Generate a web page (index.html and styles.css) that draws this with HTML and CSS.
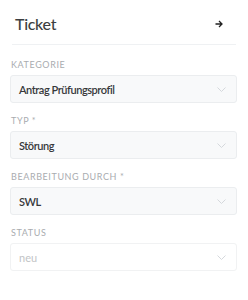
FILE: index.html
```html
<!DOCTYPE html>
<html lang="de">
<head>
<meta charset="utf-8">
<link rel="stylesheet" href="styles.css">
</head>
<body>
<div class="sidebar">
  <div class="header">
    <h2 class="title">Ticket</h2>
    <svg class="arrow" width="8" height="8" viewBox="0 0 8 8"><path d="M0.5 4H7M4 1l3 3-3 3" fill="none" stroke="#222" stroke-width="1.3"/></svg>
  </div>
  <div class="form">
    <div class="field">
      <div class="label">Kategorie</div>
      <div class="select"><span class="value">Antrag Prüfungsprofil</span><svg class="chev" width="9" height="5" viewBox="0 0 9 5"><path d="M0.5 0.5l4 4 4-4" fill="none" stroke="#d5d8dc" stroke-width="1"/></svg></div>
    </div>
    <div class="field">
      <div class="label">Typ *</div>
      <div class="select"><span class="value">Störung</span><svg class="chev" width="9" height="5" viewBox="0 0 9 5"><path d="M0.5 0.5l4 4 4-4" fill="none" stroke="#d5d8dc" stroke-width="1"/></svg></div>
    </div>
    <div class="field">
      <div class="label">Bearbeitung durch *</div>
      <div class="select"><span class="value">SWL</span><svg class="chev" width="9" height="5" viewBox="0 0 9 5"><path d="M0.5 0.5l4 4 4-4" fill="none" stroke="#d5d8dc" stroke-width="1"/></svg></div>
    </div>
    <div class="field">
      <div class="label">Status</div>
      <div class="select disabled"><span class="value">neu</span><svg class="chev" width="9" height="5" viewBox="0 0 9 5"><path d="M0.5 0.5l4 4 4-4" fill="none" stroke="#d5d8dc" stroke-width="1"/></svg></div>
    </div>
  </div>
</div>
</body>
</html>
```
FILE: styles.css
```css
html, body {
  margin: 0;
  padding: 0;
  background: #fff;
}
body {
  font-family: "Lato", "Open Sans", sans-serif;
  width: 248px;
  height: 300px;
  overflow: hidden;
}
.sidebar {
  padding: 0 11px 0 10px;
}
.header {
  display: flex;
  align-items: center;
  justify-content: space-between;
  height: 45px;
  margin: 0 1px 0 2px;
  padding: 3px 13px 0 3px;
  border-bottom: 1px solid #eff1f3;
  box-sizing: border-box;
}
.title {
  margin: 0;
  font-size: 16px;
  font-weight: 500;
  letter-spacing: -0.3px;
  color: #3d3f41;
}
.arrow {
  display: block;
}
.form {
  display: flex;
  flex-direction: column;
  gap: 12px;
  padding-top: 14px;
}
.label {
  font-size: 9px;
  letter-spacing: 0.6px;
  text-transform: uppercase;
  color: #a9acaf;
  height: 16px;
  padding-left: 1px;
  line-height: 11px;
}
.select {
  display: flex;
  align-items: center;
  justify-content: space-between;
  height: 28px;
  box-sizing: border-box;
  border: 1px solid #ebedef;
  border-radius: 3px;
  background: #f8f9fa;
  padding: 0 10px 0 8px;
}
.value {
  font-size: 11px;
  font-weight: 600;
  letter-spacing: -0.45px;
  color: #36383a;
}
.select.disabled {
  background: #fff;
  border-color: #f1f2f3;
}
.select.disabled .value {
  color: #c2c4c6;
  font-weight: 400;
  letter-spacing: 0;
}
```
